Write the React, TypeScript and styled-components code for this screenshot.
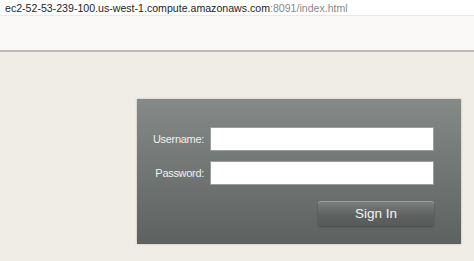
import React from "react"
import styled, { createGlobalStyle } from "styled-components"

const Global = createGlobalStyle`
  html, body { margin: 0; padding: 0; }
  body {
    background: #f0ede7;
    font-family: "Liberation Sans", Arial, sans-serif;
    width: 474px;
    height: 261px;
    overflow: hidden;
  }
`

const UrlBar = styled.div`
  height: 15px;
  background: #ffffff;
  border-bottom: 1px solid #ebe9e6;
  display: flex;
  align-items: center;
  padding-left: 5px;
  font-size: 10.6px;
  color: #1e1e1e;
  white-space: nowrap;
`

const UrlTail = styled.span`
  color: #8a8a8a;
`

const Toolbar = styled.div`
  height: 34px;
  background: #faf9f7;
  border-bottom: 2px solid #bdb9b3;
`

const Stage = styled.div`
  display: flex;
  justify-content: flex-end;
  padding: 47px 13px 0 0;
`

const Panel = styled.form`
  width: 324px;
  height: 145px;
  box-sizing: border-box;
  background: linear-gradient(#858a88, #5d6261);
  box-shadow: 0 0 2px rgba(0, 0, 0, 0.25);
  padding: 28px 27px 0 0;
  display: flex;
  flex-direction: column;
  align-items: flex-end;
`

const Row = styled.div<{ $gap?: number }>`
  display: flex;
  align-items: center;
  margin-bottom: ${(p) => p.$gap ?? 0}px;
`

const Label = styled.label`
  color: #f0f0f0;
  font-size: 11px;
  letter-spacing: -0.3px;
  margin-right: 6px;
  text-align: right;
`

const Field = styled.input`
  width: 224px;
  height: 24px;
  box-sizing: border-box;
  border: 1px solid #9a9e9d;
  background: #ffffff;
  outline: none;
`

const Button = styled.button`
  margin-top: 16px;
  width: 116px;
  height: 25px;
  border: none;
  border-radius: 3px;
  background: linear-gradient(#7c8180, #5c6160 60%, #575c5b);
  box-shadow: inset 0 1px 0 rgba(255, 255, 255, 0.25), 0 1px 2px rgba(0, 0, 0, 0.3);
  color: #f4f4f4;
  font-family: "Liberation Sans", Arial, sans-serif;
  font-size: 13.5px;
  padding: 0;
`

export default function App() {
  return (
    <>
      <Global />
      <UrlBar>
        ec2-52-53-239-100.us-west-1.compute.amazonaws.com<UrlTail>:8091/index.html</UrlTail>
      </UrlBar>
      <Toolbar />
      <Stage>
        <Panel onSubmit={(e) => e.preventDefault()}>
          <Row $gap={10}>
            <Label>Username:</Label>
            <Field type="text" />
          </Row>
          <Row>
            <Label>Password:</Label>
            <Field type="password" />
          </Row>
          <Button type="submit">Sign In</Button>
        </Panel>
      </Stage>
    </>
  )
}
